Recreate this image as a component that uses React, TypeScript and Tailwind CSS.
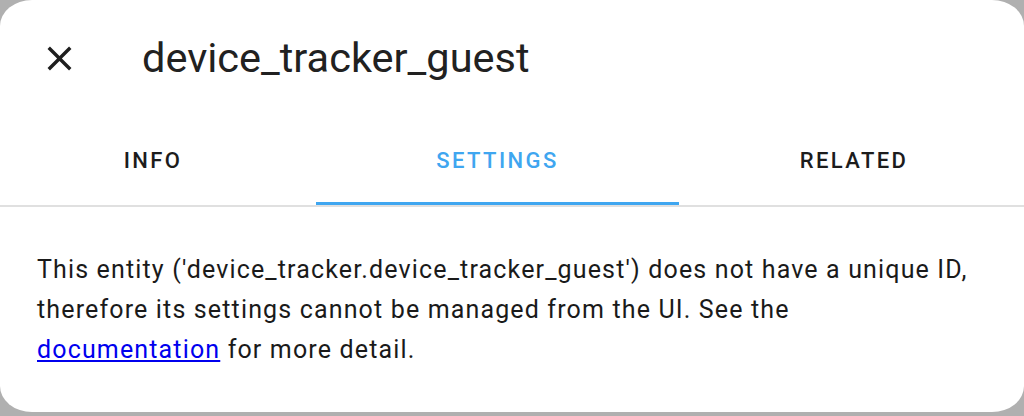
import React from 'react';

const tabs = ['Info', 'Settings', 'Related'];

function CloseIcon() {
    return (
        <svg viewBox="0 0 24 24" className="h-[41px] w-[41px]" fill="currentColor">
            <path d="M19,6.41L17.59,5L12,10.59L6.41,5L5,6.41L10.59,12L5,17.59L6.41,19L12,13.41L17.59,19L19,17.59L13.41,12L19,6.41Z" />
        </svg>
    );
}

export default function App() {
    return (
        <div className="h-[416px] w-[1024px] overflow-hidden bg-[#b0b0b0] font-['Roboto',sans-serif] text-[#212121]">
            <div className="flex h-[412px] flex-col rounded-[32px/26px] bg-white">
                {/* header */}
                <div className="flex h-[116px] shrink-0 items-center">
                    <button className="ml-[39px] flex items-center justify-center text-[#1e1e1e]">
                        <CloseIcon />
                    </button>
                    <h2 className="ml-[62px] text-[41.5px] font-normal leading-none">
                        device_tracker_guest
                    </h2>
                </div>

                {/* tabs */}
                <div className="grid h-[89px] shrink-0 grid-cols-[316px_368px_1fr]">
                    {tabs.map((tab, i) => {
                        const active = i === 1;
                        return (
                            <div
                                key={tab}
                                className={
                                    i === 0
                                        ? 'relative flex items-center justify-center pr-[10px]'
                                        : i === 1
                                            ? 'relative flex items-center justify-center pr-[5px]'
                                            : 'relative flex items-center justify-center'
                                }
                            >
                                <span
                                    className={
                                        active
                                            ? 'text-[22px] font-medium uppercase tracking-[2.4px] text-[#3fa6f0]'
                                            : 'text-[22px] font-medium uppercase tracking-[2.4px] text-[#1c1c1c]'
                                    }
                                >
                                    {tab}
                                </span>
                                {active && (
                                    <div className="absolute bottom-0 left-0 right-[5px] h-[3px] bg-[#3fa6f0]" />
                                )}
                            </div>
                        );
                    })}
                </div>
                <div className="h-[2px] shrink-0 bg-[#e0e0e0]" />

                {/* body */}
                <div className="pl-[37px] pr-[46px] pt-[43px]">
                    <p className="text-[25px] leading-[40px] tracking-[1.15px] text-[#1a1a1a]">
                        This entity ('device_tracker.device_tracker_guest') does not have a unique ID,
                        therefore its settings cannot be managed from the UI. See the{' '}
                        <a href="#" className="text-[#0000ee] underline">
                            documentation
                        </a>{' '}
                        for more detail.
                    </p>
                </div>
            </div>
        </div>
    );
}
